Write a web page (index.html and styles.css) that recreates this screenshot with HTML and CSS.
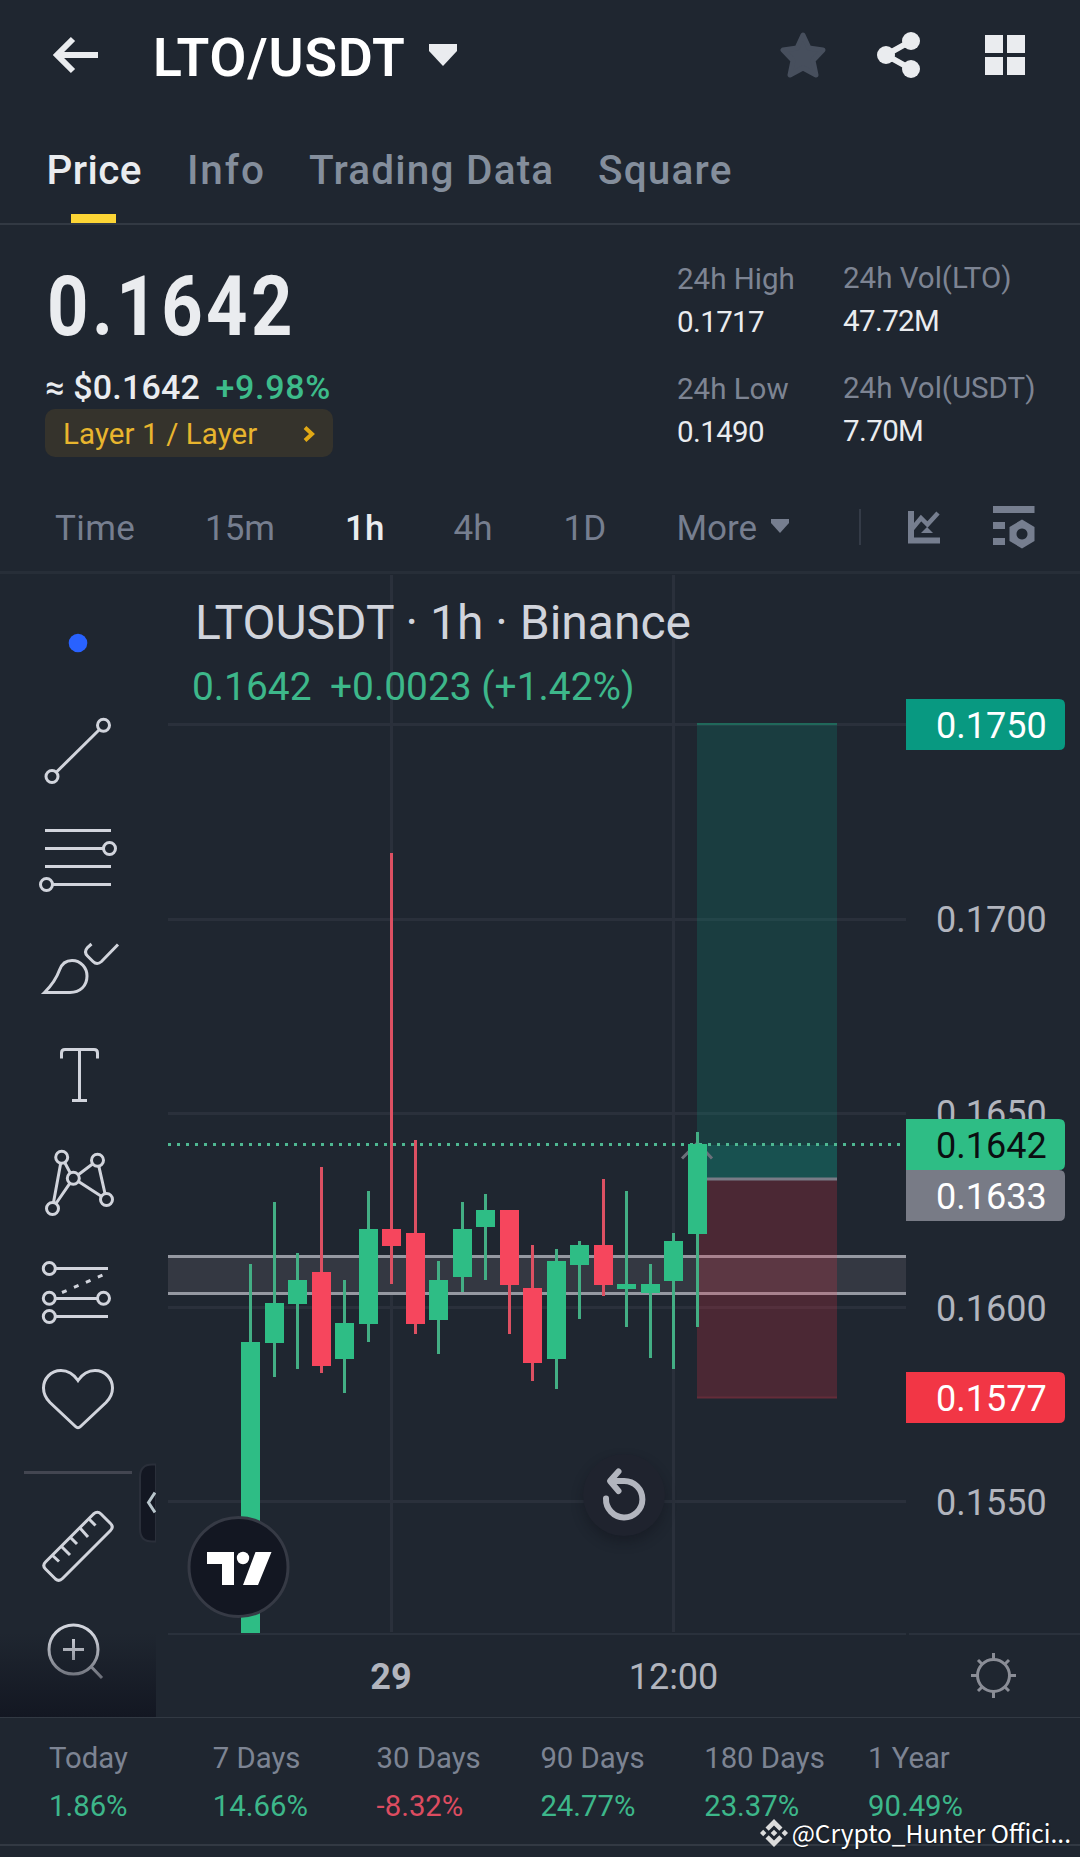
FILE: index.html
```html
<!DOCTYPE html>
<html lang="en">
<head>
<meta charset="utf-8">
<title>LTO/USDT</title>
<link rel="stylesheet" href="styles.css">
</head>
<body>
<div class="app">
  <header class="header">
    <svg class="back" viewBox="0 0 46 38" width="46" height="38"><path d="M45 19H6M20 3L4 19L20 35" fill="none" stroke="#eaecef" stroke-width="6"/></svg>
    <h1 class="pair">LTO/USDT</h1>
    <svg class="pair-caret" viewBox="0 0 28 22" width="28" height="22"><path d="M0 0H28V7L14 22L0 7Z" fill="#eaecef"/></svg>
    <svg class="star" viewBox="0 0 46 46" width="46" height="46"><path d="M23 3L29 16L43 18L33 28.500L36 43L23 36L10 43L13 28.500L3 18L17 16Z" fill="#474f5d" stroke="#474f5d" stroke-width="5" stroke-linejoin="round"/></svg>
    <svg class="share" viewBox="0 0 43 46" width="43" height="46"><g fill="#eaecef"><circle cx="9" cy="23" r="9"/><circle cx="34" cy="9" r="9"/><circle cx="34" cy="37" r="9"/></g><path d="M34 9L9 23L34 37" fill="none" stroke="#eaecef" stroke-width="6"/></svg>
    <svg class="grid" viewBox="0 0 40 40" width="40" height="40"><path d="M0 0h18v18H0zM22 0h18v18H22zM0 22h18v18H0zM22 22h18v18H22z" fill="#eaecef"/></svg>
  </header>

  <nav class="tabs">
    <span class="tab active">Price</span>
    <span class="tab info">Info</span>
    <span class="tab trading">Trading Data</span>
    <span class="tab">Square</span>
  </nav>

  <section class="summary">
    <div class="quote">
      <div class="price">0.1642</div>
      <div class="approx"><span class="fiat">≈ $0.1642</span><span class="change">+9.98%</span></div>
      <div class="chip"><span>Layer 1 / Layer</span><svg viewBox="0 0 12 16" width="12" height="16"><path d="M2 1.500L9 8L2 14.500" fill="none" stroke="#e0a815" stroke-width="4"/></svg></div>
    </div>
    <div class="stats">
      <dl class="stat-col"><div><dt>24h High</dt><dd>0.1717</dd></div><div><dt>24h Low</dt><dd>0.1490</dd></div></dl>
      <dl class="stat-col vol"><div><dt>24h Vol(LTO)</dt><dd>47.72M</dd></div><div><dt>24h Vol(USDT)</dt><dd>7.70M</dd></div></dl>
    </div>
  </section>

  <nav class="intervals">
    <span class="time">Time</span><span class="m15">15m</span><span class="on">1h</span><span>4h</span><span>1D</span>
    <span class="more">More<svg viewBox="0 0 18 14" width="18" height="14"><path d="M0 0H18V4L9 14L0 4Z" fill="#767e8f"/></svg></span>
    <i class="sep"></i>
    <svg viewBox="909 510 33 33" width="33" height="33"><path d="M912 510V539.500H941" fill="none" stroke="#767e8f" stroke-width="6"/><path d="M913 528L922 517L928.500 523.500L939 512" fill="none" stroke="#767e8f" stroke-width="4.500"/><path d="M922 532L928 526L934 532Z" fill="#767e8f"/></svg>
    <svg viewBox="994 506 42 43" width="42" height="43"><path d="M994 506h41.500v7H994zM994 522h12v7h-12zM994 538h12v7h-12z" fill="#767e8f"/><path fill-rule="evenodd" d="M1023 519.500L1035.500 527V541L1023 548.500L1010.500 541V527ZM1023 528.500a5.500 5.500 0 1 0 .01 0Z" fill="#767e8f"/></svg>
  </nav>

  <main class="workspace">
    <aside class="tools">
      <svg viewBox="0 575 156 135" height="135"><circle cx="78" cy="643" r="9.300" fill="#2962ff"/></svg>
      <svg viewBox="0 710 156 90" height="90"><circle cx="52" cy="776.500" r="6"/><circle cx="103.500" cy="725.300" r="6"/><path d="M56.500 772L99 730"/></svg>
      <svg viewBox="0 800 156 120" height="120"><path d="M45 830.500H111M45 848.500H103M45 866.500H111M53 884.500H111"/><circle cx="109.500" cy="848.500" r="6"/><circle cx="46.500" cy="884.500" r="6"/></svg>
      <svg viewBox="0 920 156 105" height="105"><path d="M44.500 992.500C52 985 57 977 59.500 970C62 963 67 960.500 72 960.500C81 960.500 87 968 87 976C87 986 80 992.500 70 992.500Z"/><path d="M91.500 944L87.500 947.500Q83.500 952 87.500 956L93 961.500Q97 965.500 101.500 961.500L118 944.500"/></svg>
      <svg viewBox="0 1025 156 105" height="105"><path d="M61.500 1058.500V1053Q61.500 1049.500 65 1049.500H94Q97.500 1049.500 97.500 1053V1058.500M79.500 1049.500V1100.500M72 1100.500H87"/></svg>
      <svg viewBox="0 1130 156 110" height="110"><circle cx="61.700" cy="1157.300" r="6"/><circle cx="97.500" cy="1160.300" r="6"/><circle cx="73.300" cy="1178.300" r="6"/><circle cx="52.500" cy="1208.500" r="6"/><circle cx="106.500" cy="1199.500" r="6"/><path d="M60.700 1163.300L53.500 1202.500M64.700 1162.500L70.300 1173M78.300 1174.700L92.500 1164M69.800 1183.300L56 1203.500M78.500 1181.500L101.300 1196.300M98.800 1166.200L105 1193.500"/></svg>
      <svg viewBox="0 1240 156 105" height="105"><circle cx="49.300" cy="1268.500" r="6"/><circle cx="49.300" cy="1298.300" r="6"/><circle cx="49.300" cy="1316.500" r="6"/><circle cx="103.500" cy="1298.300" r="6"/><path d="M55.300 1268.500H108M55.300 1298.500H97M55.300 1316.500H108"/><path d="M62 1292.500L104 1274.500" stroke-dasharray="5 8"/></svg>
      <svg viewBox="0 1345 156 105" height="105"><path d="M78 1380.500C73.500 1374 67 1370.500 61 1370.500C50.500 1370.500 43.500 1379 43.500 1388C43.500 1394 46 1398.500 50 1402.500L75.500 1426.500Q78 1429 80.500 1426.500L106 1402.500C110 1398.500 112.500 1394 112.500 1388C112.500 1379 105.500 1370.500 95 1370.500C89 1370.500 82.500 1374 78 1380.500Z"/></svg>
      <svg viewBox="0 1450 156 40" height="40"><path d="M24 1472.500H132" stroke="#434651"/></svg>
      <svg viewBox="0 1491 156 115" height="115"><path d="M93.500 1515L45.500 1563Q42 1566.500 45.500 1570L55.500 1580Q59 1583 62.500 1579.500L110.500 1531.500Q114 1528 110.500 1524.500L101 1515Q97.500 1511.500 93.500 1515Z"/><path d="M88.500 1519.500L95.500 1526.500M80 1529L88 1538M70 1538L77 1545M61.500 1547.500L70 1556M52 1556L59 1562.500"/></svg>
      <svg viewBox="0 1605 156 112" height="112"><circle cx="73.500" cy="1649.500" r="24.500"/><path d="M63 1649.500H84M73.500 1639V1660M91 1666.500L102 1678"/></svg>
      <div class="fade"></div>
      <svg class="handle" viewBox="138 1462 18 82" width="18" height="82"><path d="M156 1464.500H152Q140 1464.500 140 1477V1529Q140 1541.500 152 1541.500H156Z" fill="#131722" stroke="#2a2f3a" stroke-width="2"/><path d="M155 1492.500L148.500 1502.500L155 1512.500" stroke="#b9c6cc"/></svg>
    </aside>

    <section class="chart">
      <svg class="plot" viewBox="156 575 924 1142" width="924" height="1142">
        <!-- grid -->
        <path d="M168 724.500H906M168 919.500H906M168 1113.500H906M168 1307.500H906M168 1501.500H906M391.500 575V1632M673.500 575V1632" stroke="#2a303b" stroke-width="3"/>
        <path d="M168 1634H906M909 1634H1080" stroke="#2a313c" stroke-width="2"/>
        <!-- demand zone -->
        <rect x="168" y="1257" width="738" height="37" fill="#343842"/>
        <path d="M168 1256.500H906M168 1293.500H906" stroke="#9598a1" stroke-width="3"/>
        <!-- long position: target and stop -->
        <rect x="697" y="723" width="140" height="456" fill="#089981" fill-opacity=".2"/>
        <rect x="697" y="1145" width="140" height="33" fill="#129c89" fill-opacity=".22"/>
        <path d="M697 724H837" stroke="#20685a" stroke-width="2"/>
        <rect x="697" y="1180" width="140" height="218" fill="#f23645" fill-opacity=".21"/>
        <path d="M697 1397.500H837" stroke="#642c39" stroke-width="2"/>
        <path d="M697 1179H837" stroke="#787b86" stroke-width="3"/>
        <path d="M682 1158.500L697.500 1143L712 1158.500" fill="none" stroke="#6b707a" stroke-width="3"/>
        <!-- candles -->
        <path d="M250.500 1264V1342M274.500 1202V1377M297.500 1253V1369M344.500 1280V1393M368.500 1191V1342M438.500 1261V1354M462.500 1202V1292M485.500 1194V1280M556.500 1249V1389M579.500 1241V1319M626.500 1191V1327M650.500 1264V1358M673.500 1233V1369M697.500 1132V1327" stroke="#43ae84" stroke-width="3"/>
        <path d="M321.500 1167V1373M391.500 853V1284M415.500 1140V1334M509.500 1210V1334M532.500 1245V1381M603.500 1179V1296" stroke="#dc5062" stroke-width="3"/>
        <path d="M241 1342h19V1633h-19zM265 1303h19v40h-19zM288 1280h19v24h-19zM335 1323h19v36h-19zM359 1229h19v95h-19zM429 1280h19v40h-19zM453 1229h19v48h-19zM476 1210h19v17h-19zM547 1261h19v98h-19zM570 1245h19v20h-19zM617 1284h19v5h-19zM641 1284h19v9h-19zM664 1241h19v40h-19zM688 1144h19v90h-19z" fill="#2ebd85"/>
        <path d="M312 1272h19v94h-19zM382 1229h19v17h-19zM406 1233h19v91h-19zM500 1210h19v75h-19zM523 1288h19v75h-19zM594 1245h19v40h-19z" fill="#f6465d"/>
        <path d="M168 1144.500H903" stroke="#4fb892" stroke-width="3" stroke-dasharray="3 6"/>
        <path d="M688 1144h19v5h-19z" fill="#2ebd85"/>
        <!-- price scale -->
        <g class="scale">
          <text x="936" y="932">0.1700</text>
          <text x="936" y="1126">0.1650</text>
          <text x="936" y="1321">0.1600</text>
          <text x="936" y="1515">0.1550</text>
          <path d="M906 699H1059Q1065 699 1065 705V744Q1065 750 1059 750H906Z" fill="#089981"/>
          <path d="M906 1170H1059Q1065 1170 1065 1176V1215Q1065 1221 1059 1221H906Z" fill="#787b86"/>
          <path d="M906 1119H1059Q1065 1119 1065 1125V1164Q1065 1170 1059 1170H906Z" fill="#2ebd85"/>
          <path d="M906 1372H1059Q1065 1372 1065 1378V1417Q1065 1423 1059 1423H906Z" fill="#f23645"/>
          <text class="light" x="936" y="737.500">0.1750</text>
          <text class="dark" x="936" y="1157.500">0.1642</text>
          <text class="light" x="936" y="1208.500">0.1633</text>
          <text class="light" x="936" y="1410.500">0.1577</text>
          <text class="day" x="391" y="1688.500" text-anchor="middle">29</text>
          <text x="673.500" y="1688.500" text-anchor="middle">12:00</text>
        </g>
        <g fill="none" stroke="#8a8d96" stroke-width="3"><circle cx="993.500" cy="1675.500" r="16"/><path d="M993.500 1660V1653M993.500 1691V1698M978 1675.500H971M1009 1675.500H1016M982.500 1664.500L978 1660M1004.500 1664.500L1009 1660M982.500 1686.500L978 1691M1004.500 1686.500L1009 1691"/></g>
        <!-- brand badge -->
        <circle cx="238.500" cy="1567" r="49.500" fill="#131722" stroke="#363a45" stroke-width="3"/>
        <path d="M207 1552H234V1585H222V1564H207ZM255.500 1552H271.500L258 1585H243Z" fill="#fff"/><circle cx="243" cy="1558" r="6.200" fill="#fff"/>
      </svg>
      <div class="legend">
        <div class="symbol">LTOUSDT · 1h · Binance</div>
        <div class="ohlc"><span>0.1642</span><span>+0.0023 (+1.42%)</span></div>
      </div>
      <div class="reset"><svg viewBox="600 1466 48 56" width="48" height="56"><path d="M606 1497.500A18.200 18.200 0 1 0 624.200 1480H611M618.500 1470.500L610 1480L618.500 1490" fill="none" stroke="#b2b5be" stroke-width="6" stroke-linecap="round" stroke-linejoin="round"/></svg></div>
    </section>
  </main>

  <footer class="perf">
    <div><span>Today</span><b>1.86%</b></div>
    <div><span>7 Days</span><b>14.66%</b></div>
    <div><span>30 Days</span><b class="down">-8.32%</b></div>
    <div><span>90 Days</span><b>24.77%</b></div>
    <div><span>180 Days</span><b>23.37%</b></div>
    <div><span>1 Year</span><b>90.49%</b></div>
  </footer>
  <div class="watermark">
    <svg viewBox="0 0 28 28" width="28" height="28"><path d="M14 0L22.500 8.500L19.300 11.700L14 6.400L8.700 11.700L5.500 8.500ZM14 28L22.500 19.500L19.300 16.300L14 21.600L8.700 16.300L5.500 19.500ZM14 10.700L17.300 14L14 17.300L10.700 14ZM3.200 10.800L6.400 14L3.200 17.200L0 14ZM24.800 10.800L28 14L24.800 17.200L21.600 14Z" fill="#dcdcdc"/></svg>
    <span>@Crypto_Hunter Offici...</span>
  </div>
</div>
</body>
</html>
```
FILE: styles.css
```css
* { box-sizing: border-box; }
body { margin: 0; background: #1f2630; font-family: Roboto, "Liberation Sans", sans-serif; color: #eaecef; }
svg { display: block; flex: none; }
h1, dl, dd, dt { margin: 0; font-weight: 400; }
.app { position: relative; width: 1080px; height: 1857px; overflow: hidden; display: flex; flex-direction: column; white-space: nowrap; }

.header { height: 112px; flex: none; display: flex; align-items: center; padding: 0 55px 2px 53px; }
.pair { margin-left: 54px; width: 276px; font-size: 53.400px; font-weight: 600; line-height: 60px; padding-top: 5px; letter-spacing: .9px; color: #fff; }
.star { margin-left: 323px; }
.share { margin-left: 51px; }
.grid { margin-left: 65px; }

.tabs { height: 113px; flex: none; display: grid; grid-template-columns: 140.500px 122px 289px 180px; padding-left: 46.500px; border-bottom: 2px solid #323943; font-size: 40.500px; font-weight: 500; color: #848e9c; line-height: 60px; letter-spacing: 1.200px; }
.tab { position: relative; padding-top: 28px; }
.info { letter-spacing: 1.900px; }
.active { color: #eaecef; letter-spacing: .4px; }
.active::after { content: ""; position: absolute; left: 24.500px; bottom: 0; width: 45px; height: 9px; background: #fcd535; }

.summary { height: 259px; flex: none; display: flex; }
.quote { width: 677px; padding: 40px 0 0 45px; }
.price { margin-left: 2px; font-size: 84px; line-height: 84px; font-weight: 700; transform: scaleX(.86); transform-origin: left; letter-spacing: 4px; }
.approx { display: flex; margin-top: 16px; font-size: 34px; line-height: 44px; font-weight: 500; }
.fiat { width: 170.500px; letter-spacing: .2px; }
.change { color: #3dbb8a; letter-spacing: .7px; }
.chip { display: flex; align-items: center; justify-content: space-between; width: 288px; height: 48px; padding: 1px 18px 0 18px; border-radius: 10px; background: #35332c; color: #e8b52e; font-size: 29.500px; letter-spacing: .1px; }
.stats { display: flex; padding-top: 33px; color: #7d8493; font-size: 29.500px; line-height: 43px; }
.stat-col { width: 166px; display: flex; flex-direction: column; gap: 24px; }
.stat-col.vol { width: 230px; margin-top: -1px; }
.stat-col dd { color: #eaecef; letter-spacing: -.6px; }

.intervals { height: 90px; flex: none; display: grid; grid-template-columns: 150px 140px 108.500px 110px 113px 182px 49px 85px 42px; align-items: center; padding: 2px 0 0 55px; border-bottom: 3px solid #272e38; font-size: 35px; color: #767e8f; }
.intervals > svg { margin-top: -3px; }
.time { letter-spacing: .4px; }
.on { color: #eaecef; font-weight: 500; }
.more { display: flex; align-items: center; gap: 14px; }
.more svg { margin-top: -6px; }
.sep { width: 2px; height: 36px; background: #343b47; margin-top: -4px; }

.workspace { height: 1143px; flex: none; display: flex; padding-top: 1px; }
.tools { position: relative; width: 156px; }
.tools svg { width: 156px; fill: none; stroke: #d1d4dc; stroke-width: 3; }
.tools svg:first-child { stroke: none; }
.fade { position: absolute; left: 0; bottom: 0; width: 156px; height: 84px; background: linear-gradient(rgba(19, 23, 34, 0), #131722); }
.tools .handle { position: absolute; left: 138px; top: 887px; width: 18px; }

.chart { position: relative; width: 924px; }
.scale { font-size: 36px; fill: #b2b5be; }
.scale .light { fill: #fff; }
.scale .dark { fill: #0b0e11; }
.scale .day { font-weight: 700; }
.legend { position: absolute; left: 36px; top: 20px; }
.symbol { margin-left: 3px; font-size: 48px; line-height: 56px; color: #d1d4dc; }
.ohlc { display: flex; gap: 18.500px; margin-top: 13px; font-size: 38.900px; line-height: 46px; color: #3db78a; }
.reset { position: absolute; left: 427px; top: 879px; width: 82px; height: 82px; border-radius: 50%; background: #1f232e; box-shadow: 0 6px 12px rgba(14, 17, 26, .4); display: flex; align-items: center; justify-content: center; }

.perf { height: 129px; flex: none; display: grid; grid-template-columns: repeat(6, 163.800px); padding: 16px 0 0 49px; border-top: 1px solid #323943; border-bottom: 2px solid #323943; font-size: 29.300px; line-height: 48px; color: #7d8493; }
.perf span, .perf b { display: block; font-weight: 400; }
.perf b { color: #3db78a; }
.perf .down { color: #dc4c60; }

.watermark { position: absolute; right: 9px; bottom: 10px; display: flex; align-items: center; gap: 4px; font: 400 24.500px/28px "Noto Sans CJK SC", sans-serif; color: #fff; text-shadow: 0 1px 2px rgba(0, 0, 0, .5); }
```
